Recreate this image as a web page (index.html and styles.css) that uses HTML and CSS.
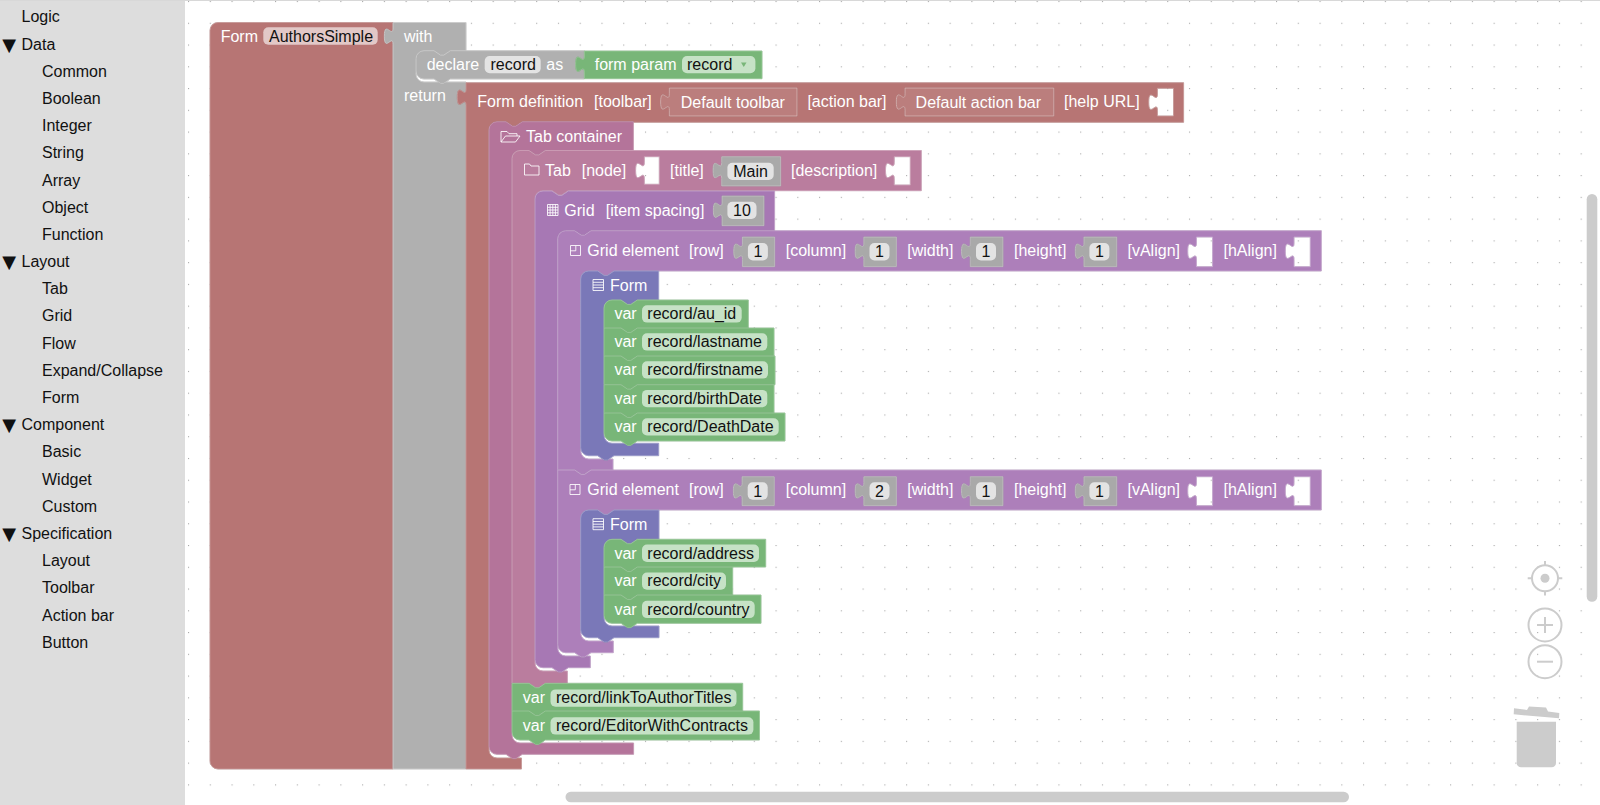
FILE: index.html
```html
<!DOCTYPE html>
<html lang="en">
  <head>
    <meta charset="UTF-8" />
    <meta name="viewport" content="width=device-width, initial-scale=1.0" />
    <title>Form editor</title>
    <link rel="stylesheet" href="styles.css">
  </head>
  <body>
    <aside class="toolbox">
      <div class="cat"><span class="caret"></span>Logic</div>
      <div class="cat"><span class="caret">▼</span>Data</div>
      <div class="sub">Common</div>
      <div class="sub">Boolean</div>
      <div class="sub">Integer</div>
      <div class="sub">String</div>
      <div class="sub">Array</div>
      <div class="sub">Object</div>
      <div class="sub">Function</div>
      <div class="cat"><span class="caret">▼</span>Layout</div>
      <div class="sub">Tab</div>
      <div class="sub">Grid</div>
      <div class="sub">Flow</div>
      <div class="sub">Expand/Collapse</div>
      <div class="sub">Form</div>
      <div class="cat"><span class="caret">▼</span>Component</div>
      <div class="sub">Basic</div>
      <div class="sub">Widget</div>
      <div class="sub">Custom</div>
      <div class="cat"><span class="caret">▼</span>Specification</div>
      <div class="sub">Layout</div>
      <div class="sub">Toolbar</div>
      <div class="sub">Action bar</div>
      <div class="sub">Button</div>
    </aside>

    <!-- workspace: viewBox uses page coordinates -->
    <svg class="workspace" viewBox="185 1 1415 804" xmlns="http://www.w3.org/2000/svg">
      <defs>
        <pattern id="dots" x="188" y="1" width="21.76" height="21.76" patternUnits="userSpaceOnUse">
          <rect width="1.1" height="1.1" class="dot" />
        </pattern>
      </defs>
      <rect x="185" y="1" width="1415" height="804" fill="url(#dots)" />

      <!-- Form AuthorsSimple -->
      <path class="b red" d="M210 30.5a8 8 0 0 1 8-8H393V769H218a8 8 0 0 1-8-8Z" />
      <text class="lbl" x="220.7" y="41">Form</text>
      <rect class="pill pill-red" x="263.3" y="27.3" width="114.4" height="17.4" rx="5" />
      <text class="txt" x="269" y="41">AuthorsSimple</text>

      <!-- with / return -->
      <path class="b gray" d="M393 22.5H466V50.7H450.3l-6.5 4.4h-3.3l-6.5-4.4H424a8 8 0 0 0-8 8V74a8 8 0 0 0 8 8H466V769H393V44.4c0-10.9-8.7 8.7-8.7-8.2s8.7 2.7 8.7-8.2Z" />
      <text class="lbl" x="404" y="41">with</text>
      <text class="lbl" x="404" y="100.7">return</text>

      <path class="b gray" d="M416 58.7a8 8 0 0 1 8-8H434l6.5 4.4h3.3l6.5-4.4H584.3V79H450.3l-6.5 4.4h-3.3l-6.5-4.4H424a8 8 0 0 1-8-8Z" />
      <text class="lbl" x="426.7" y="69">declare</text>
      <rect class="pill pill-gray" x="484.7" y="56" width="56" height="17.3" rx="5" />
      <text class="txt" x="490.5" y="69">record</text>
      <text class="lbl" x="546.3" y="69">as</text>

      <path class="b green" d="M584.3 51H762V78.7H584.3V72.4c0-10.9-8.7 8.7-8.7-8.2s8.7 2.7 8.7-8.2Z" />
      <text class="lbl" x="594.7" y="69">form param</text>
      <rect class="pill pill-green" x="682" y="56" width="73.4" height="17.3" rx="5" />
      <text class="txt" x="687" y="69">record</text>
      <path class="arrow" d="M741 62.5h5.5l-2.75 4.5Z" />

      <!-- Form definition -->
      <path class="b red" d="M466 82.7H1183.6V122.3H522.3l-6.5 4.4h-3.3l-6.5-4.4H497a8 8 0 0 0-8 8V750a8 8 0 0 0 8 8H521.5V769H466V105.4c0-10.9-8.7 8.7-8.7-8.2s8.7 2.7 8.7-8.2ZM1173.5 88.3V116H1157.4V110.4c0-10.9-8.7 8.7-8.7-8.2s8.7 2.7 8.7-8.2V88.3Z" />
      <text class="lbl" x="477.3" y="106.3">Form definition</text>
      <text class="lbl" x="594" y="106.3">[toolbar]</text>
      <path class="b shadow-red" d="M669.3 88H797V116H669.3V110.2c0-10.9-8.7 8.7-8.7-8.2s8.7 2.7 8.7-8.2Z" />
      <text class="lbl" x="680.8" y="107.7">Default toolbar</text>
      <text class="lbl" x="807.4" y="106.3">[action bar]</text>
      <path class="b shadow-red" d="M905 88H1053.8V116H905V110.2c0-10.9-8.7 8.7-8.7-8.2s8.7 2.7 8.7-8.2Z" />
      <text class="lbl" x="915.6" y="107.7">Default action bar</text>
      <text class="lbl" x="1064" y="106.3">[help URL]</text>

      <!-- Tab container -->
      <path class="b tabc" d="M489 129.7a8 8 0 0 1 8-8H506l6.5 4.4h3.3l6.5-4.4H633.4V150.5H545.3l-6.5 4.4h-3.3l-6.5-4.4H520a8 8 0 0 0-8 8V735a8 8 0 0 0 8 8H633.6V754.3H522.3l-6.5 4.4h-3.3l-6.5-4.4H497a8 8 0 0 1-8-8Z" />
      <path class="ico" d="M501 142V131.5h6l2 2.2h8v2.3M501 142h14.5l4.5-6H505.5Z" />
      <text class="lbl" x="526" y="141.3">Tab container</text>

      <!-- Tab -->
      <path class="b tab" d="M512 158.5a8 8 0 0 1 8-8H529l6.5 4.4h3.3l6.5-4.4H921.3V190.7H568.3l-6.5 4.4h-3.3l-6.5-4.4H543a8 8 0 0 0-8 8V663a8 8 0 0 0 8 8H567.4V683.3H545.3l-6.5 4.4h-3.3l-6.5-4.4H512ZM659.3 156.7V184.3H644.3V178.7c0-10.9-8.7 8.7-8.7-8.2s8.7 2.7 8.7-8.2V156.7ZM910.3 156.7V185H894.2V178.7c0-10.9-8.7 8.7-8.7-8.2s8.7 2.7 8.7-8.2V156.7Z" />
      <path class="ico" d="M524.5 175V164h5l1.5 2h8v9Z" />
      <text class="lbl" x="545" y="175">Tab</text>
      <text class="lbl" x="581.7" y="175">[node]</text>
      <text class="lbl" x="670" y="175">[title]</text>
      <path class="b num" d="M721.7 156.7H780.7V186H721.7V178.7c0-10.9-8.7 8.7-8.7-8.2s8.7 2.7 8.7-8.2Z" />
      <rect class="pill pill-gray" x="727.4" y="162.7" width="46.3" height="17.3" rx="5" />
      <text class="val" x="750.5" y="176">Main</text>
      <text class="lbl" x="791" y="175">[description]</text>

      <!-- Grid -->
      <path class="b grid" d="M535 199a8 8 0 0 1 8-8H552l6.5 4.4h3.3l6.5-4.4H774.6V231H591l-6.5 4.4h-3.3l-6.5-4.4H565.7a8 8 0 0 0-8 8V648a8 8 0 0 0 8 8H590.3V667.7H568.3l-6.5 4.4h-3.3l-6.5-4.4H543a8 8 0 0 1-8-8Z" />
      <path class="ico" d="M547.5 204.5h10.5v11h-10.5ZM547.5 207.3h10.5M547.5 210h10.5M547.5 212.8h10.5M550.1 204.5v11M552.8 204.5v11M555.4 204.5v11" />
      <text class="lbl" x="564.3" y="215">Grid</text>
      <text class="lbl" x="605.7" y="215">[item spacing]</text>
      <path class="b num" d="M722 196H764V225.7H722V218.4c0-10.9-8.7 8.7-8.7-8.2s8.7 2.7 8.7-8.2Z" />
      <rect class="pill pill-gray" x="727.4" y="201.7" width="29.1" height="17.3" rx="5" />
      <text class="val" x="742" y="215">10</text>

      <!-- Grid element 1 -->
      <path class="b cell" d="M557.7 238.7a8 8 0 0 1 8-8H574.7l6.5 4.4h3.3l6.5-4.4H1321.3V271H614l-6.5 4.4h-3.3l-6.5-4.4H588.7a8 8 0 0 0-8 8V451a8 8 0 0 0 8 8H613V470H591l-6.5 4.4h-3.3l-6.5-4.4H557.7ZM1212.6 237V266.7H1196.4V259.4c0-10.9-8.7 8.7-8.7-8.2s8.7 2.7 8.7-8.2V237ZM1310.3 237V266.7H1294V259.4c0-10.9-8.7 8.7-8.7-8.2s8.7 2.7 8.7-8.2V237Z" />
      <path class="ico" d="M570.5 245.5h10v10h-10ZM570.5 250.8h5.3v-5.3" />
      <text class="lbl" x="587.3" y="255">Grid element</text>
      <text class="lbl" x="689" y="255">[row]</text>
      <path class="b num" d="M742.4 237H774.7V266.7H742.4V259.4c0-10.9-8.7 8.7-8.7-8.2s8.7 2.7 8.7-8.2Z" />
      <rect class="pill pill-gray" x="747.9" y="243" width="20" height="17.5" rx="5" />
      <text class="val" x="757.9" y="256.5">1</text>
      <text class="lbl" x="785.7" y="255">[column]</text>
      <path class="b num" d="M863.8 237H896.4V266.7H863.8V259.4c0-10.9-8.7 8.7-8.7-8.2s8.7 2.7 8.7-8.2Z" />
      <rect class="pill pill-gray" x="869.5" y="243" width="20" height="17.5" rx="5" />
      <text class="val" x="879.5" y="256.5">1</text>
      <text class="lbl" x="907.2" y="255">[width]</text>
      <path class="b num" d="M970.2 237H1003V266.7H970.2V259.4c0-10.9-8.7 8.7-8.7-8.2s8.7 2.7 8.7-8.2Z" />
      <rect class="pill pill-gray" x="976" y="243" width="20" height="17.5" rx="5" />
      <text class="val" x="986" y="256.5">1</text>
      <text class="lbl" x="1014" y="255">[height]</text>
      <path class="b num" d="M1083.9 237H1116.8V266.7H1083.9V259.4c0-10.9-8.7 8.7-8.7-8.2s8.7 2.7 8.7-8.2Z" />
      <rect class="pill pill-gray" x="1089.4" y="243" width="20" height="17.5" rx="5" />
      <text class="val" x="1099.4" y="256.5">1</text>
      <text class="lbl" x="1127.5" y="255">[vAlign]</text>
      <text class="lbl" x="1223.5" y="255">[hAlign]</text>

      <!-- Form 1 -->
      <path class="b form" d="M580.7 279a8 8 0 0 1 8-8H597.7l6.5 4.4h3.3l6.5-4.4H658.7V300H637.3l-6.5 4.4h-3.3l-6.5-4.4H612a8 8 0 0 0-8 8V435.3a8 8 0 0 0 8 8H658.7V455.7H614l-6.5 4.4h-3.3l-6.5-4.4H588.7a8 8 0 0 1-8-8Z" />
      <path class="ico" d="M593 279.5h10.5v11H593ZM593 282.3h10.5M593 285h10.5M593 287.7h10.5" />
      <text class="lbl" x="610" y="290">Form</text>

      <path class="b green" d="M604 308a8 8 0 0 1 8-8H621l6.5 4.4h3.3l6.5-4.4H748.3V328H637.3l-6.5 4.4h-3.3l-6.5-4.4H604Z" />
      <text class="lbl" x="614.4" y="318.7">var</text>
      <rect class="pill pill-green" x="642" y="305.3" width="99.7" height="17.3" rx="5" />
      <text class="txt" x="647.3" y="318.7">record/au_id</text>

      <path class="b green" d="M604 328H621l6.5 4.4h3.3l6.5-4.4H774V356H637.3l-6.5 4.4h-3.3l-6.5-4.4H604Z" />
      <text class="lbl" x="614.4" y="346.7">var</text>
      <rect class="pill pill-green" x="642" y="333.3" width="125.3" height="17.3" rx="5" />
      <text class="txt" x="647.3" y="346.7">record/lastname</text>

      <path class="b green" d="M604 356H621l6.5 4.4h3.3l6.5-4.4H775V384.7H637.3l-6.5 4.4h-3.3l-6.5-4.4H604Z" />
      <text class="lbl" x="614.4" y="374.7">var</text>
      <rect class="pill pill-green" x="642" y="361.3" width="126" height="17.3" rx="5" />
      <text class="txt" x="647.3" y="374.7">record/firstname</text>

      <path class="b green" d="M604 384.7H621l6.5 4.4h3.3l6.5-4.4H774V413H637.3l-6.5 4.4h-3.3l-6.5-4.4H604Z" />
      <text class="lbl" x="614.4" y="403.2">var</text>
      <rect class="pill pill-green" x="642" y="389.9" width="125.3" height="17.3" rx="5" />
      <text class="txt" x="647.3" y="403.2">record/birthDate</text>

      <path class="b green" d="M604 413H621l6.5 4.4h3.3l6.5-4.4H785V441H637.3l-6.5 4.4h-3.3l-6.5-4.4H612a8 8 0 0 1-8-8Z" />
      <text class="lbl" x="614.4" y="431.5">var</text>
      <rect class="pill pill-green" x="642" y="418.2" width="136.7" height="17.3" rx="5" />
      <text class="txt" x="647.3" y="431.5">record/DeathDate</text>

      <!-- Grid element 2 -->
      <path class="b cell" d="M557.7 470H574.7l6.5 4.4h3.3l6.5-4.4H1321.3V510H614l-6.5 4.4h-3.3l-6.5-4.4H588.7a8 8 0 0 0-8 8V633a8 8 0 0 0 8 8H613.3V652.7H591l-6.5 4.4h-3.3l-6.5-4.4H565.7a8 8 0 0 1-8-8ZM1212.6 476.7V505.7H1196.4V499.1c0-10.9-8.7 8.7-8.7-8.2s8.7 2.7 8.7-8.2V476.7ZM1310.3 476.7V505.7H1294V499.1c0-10.9-8.7 8.7-8.7-8.2s8.7 2.7 8.7-8.2V476.7Z" />
      <path class="ico" d="M570 484.5h10v10h-10ZM570 489.8h5.3v-5.3" />
      <text class="lbl" x="587.3" y="494.7">Grid element</text>
      <text class="lbl" x="689" y="494.7">[row]</text>
      <path class="b num" d="M742 476.7H774.3V505.7H742V499.1c0-10.9-8.7 8.7-8.7-8.2s8.7 2.7 8.7-8.2Z" />
      <rect class="pill pill-gray" x="747.7" y="482.2" width="20" height="17.5" rx="5" />
      <text class="val" x="757.7" y="496">1</text>
      <text class="lbl" x="785.7" y="494.7">[column]</text>
      <path class="b num" d="M863.8 476.7H896.4V505.7H863.8V499.1c0-10.9-8.7 8.7-8.7-8.2s8.7 2.7 8.7-8.2Z" />
      <rect class="pill pill-gray" x="869.5" y="482.2" width="20" height="17.5" rx="5" />
      <text class="val" x="879.5" y="496">2</text>
      <text class="lbl" x="907.2" y="494.7">[width]</text>
      <path class="b num" d="M970.2 476.7H1003V505.7H970.2V499.1c0-10.9-8.7 8.7-8.7-8.2s8.7 2.7 8.7-8.2Z" />
      <rect class="pill pill-gray" x="976" y="482.2" width="20" height="17.5" rx="5" />
      <text class="val" x="986" y="496">1</text>
      <text class="lbl" x="1014" y="494.7">[height]</text>
      <path class="b num" d="M1083.9 476.7H1116.8V505.7H1083.9V499.1c0-10.9-8.7 8.7-8.7-8.2s8.7 2.7 8.7-8.2Z" />
      <rect class="pill pill-gray" x="1089.4" y="482.2" width="20" height="17.5" rx="5" />
      <text class="val" x="1099.4" y="496">1</text>
      <text class="lbl" x="1127.5" y="494.7">[vAlign]</text>
      <text class="lbl" x="1223.5" y="494.7">[hAlign]</text>

      <!-- Form 2 -->
      <path class="b form" d="M580.7 518a8 8 0 0 1 8-8H597.7l6.5 4.4h3.3l6.5-4.4H659V539.3H637.3l-6.5 4.4h-3.3l-6.5-4.4H612a8 8 0 0 0-8 8V618a8 8 0 0 0 8 8H659V637.7H614l-6.5 4.4h-3.3l-6.5-4.4H588.7a8 8 0 0 1-8-8Z" />
      <path class="ico" d="M593 518.7h10.5v11H593ZM593 521.5h10.5M593 524.2h10.5M593 526.9h10.5" />
      <text class="lbl" x="610" y="529.3">Form</text>

      <path class="b green" d="M604 547.3a8 8 0 0 1 8-8H621l6.5 4.4h3.3l6.5-4.4H765.7V567H637.3l-6.5 4.4h-3.3l-6.5-4.4H604Z" />
      <text class="lbl" x="614.4" y="558">var</text>
      <rect class="pill pill-green" x="642" y="544.6" width="117" height="17.3" rx="5" />
      <text class="txt" x="647.3" y="558">record/address</text>

      <path class="b green" d="M604 567H621l6.5 4.4h3.3l6.5-4.4H732.7V595H637.3l-6.5 4.4h-3.3l-6.5-4.4H604Z" />
      <text class="lbl" x="614.4" y="585.9">var</text>
      <rect class="pill pill-green" x="642" y="572.5" width="84" height="17.3" rx="5" />
      <text class="txt" x="647.3" y="585.9">record/city</text>

      <path class="b green" d="M604 595H621l6.5 4.4h3.3l6.5-4.4H761V623.3H637.3l-6.5 4.4h-3.3l-6.5-4.4H612a8 8 0 0 1-8-8Z" />
      <text class="lbl" x="614.4" y="614.2">var</text>
      <rect class="pill pill-green" x="642" y="600.8" width="112.7" height="17.3" rx="5" />
      <text class="txt" x="647.3" y="614.2">record/country</text>

      <!-- variables under the tab -->
      <path class="b green" d="M512 683.3H529l6.5 4.4h3.3l6.5-4.4H742.7V711H545.3l-6.5 4.4h-3.3l-6.5-4.4H512Z" />
      <text class="lbl" x="522.8" y="702.3">var</text>
      <rect class="pill pill-green" x="550.5" y="689.4" width="186" height="17.3" rx="5" />
      <text class="txt" x="556" y="702.3">record/linkToAuthorTitles</text>

      <path class="b green" d="M512 711H529l6.5 4.4h3.3l6.5-4.4H759.5V740H545.3l-6.5 4.4h-3.3l-6.5-4.4H520a8 8 0 0 1-8-8Z" />
      <text class="lbl" x="522.8" y="730.7">var</text>
      <rect class="pill pill-green" x="550.5" y="717.3" width="202.9" height="17.3" rx="5" />
      <text class="txt" x="556" y="730.7">record/EditorWithContracts</text>

      <!-- controls -->
      <circle class="ctl" cx="1545" cy="578.3" r="13" />
      <circle class="ctl-fill" cx="1545" cy="578.3" r="4.5" />
      <path class="ctl" d="M1545 561v4.5M1545 591v4.5M1527.7 578.3h4.5M1557.8 578.3h4.5" />
      <circle class="ctl" cx="1545" cy="625" r="16.5" />
      <path class="ctl" d="M1537 625h16M1545 617v16" />
      <circle class="ctl" cx="1545" cy="661.7" r="16.5" />
      <path class="ctl" d="M1537 661.7h16" />
      <path class="ctl-fill" d="M1514 708.3 1527 710 1529 706.5 1546 707.5 1548 711.5 1559.3 713 1559 718.3 1513.7 714.3Z" />
      <path class="ctl-fill" d="M1516.7 721.7H1556V763a4.3 4.3 0 0 1-4.3 4.3H1521a4.3 4.3 0 0 1-4.3-4.3Z" />

      <!-- scrollbars -->
      <rect class="scroll" x="1586.7" y="194" width="10.6" height="407.7" rx="5.3" />
      <rect class="scroll" x="565.5" y="791.7" width="783.5" height="10.6" rx="5.3" />
    </svg>
  </body>
</html>
```

FILE: styles.css
```css
html,
body {
  margin: 0;
  height: 100%;
}
body {
  display: flex;
  box-sizing: border-box;
  height: 805px;
  overflow: hidden;
  border-top: 1px solid #d8d8d8;
  font-family: "Liberation Sans", Arial, sans-serif;
  font-size: 16px;
  background-color: #fff;
}
.toolbox {
  flex: 0 0 185px;
  padding-top: 2.4px;
  background-color: #ddd;
  color: #111;
}
.cat,
.sub {
  display: flex;
  align-items: center;
  height: 27.2px;
  line-height: 27.2px;
}
.sub {
  padding-left: 42px;
}
.caret {
  flex: 0 0 18.5px;
  margin-right: 3px;
  font-family: "DejaVu Sans", sans-serif;
  font-size: 18px;
  text-align: center;
}
.workspace {
  flex: 0 0 1415px;
  width: 1415px;
  height: 804px;
}
.dot {
  fill: #a8a8a8;
}

/* blocks */
.b {
  fill-rule: evenodd;
  stroke-width: 0.8;
  filter: drop-shadow(0.7px 0.7px 0 rgba(0, 0, 0, 0.22));
}
.red {
  fill: #b77574;
  stroke: #c99a99;
}
.shadow-red {
  fill: #bb7e7d;
  stroke: #d8b6b5;
}
.gray {
  fill: #b0b0b0;
  stroke: #cfcfcf;
}
.num {
  fill: #a9a9a9;
  stroke: #c4c4c4;
}
.green {
  fill: #78b678;
  stroke: #9acb9a;
}
.tabc {
  fill: #b4749a;
  stroke: #ca9ab6;
}
.tab {
  fill: #ba7d9e;
  stroke: #d0a2ba;
}
.grid {
  fill: #a778b4;
  stroke: #c4a2cd;
}
.cell {
  fill: #ad7fba;
  stroke: #c8a8d2;
}
.form {
  fill: #7a78b8;
  stroke: #a2a1cf;
}

/* block text */
.lbl,
.txt,
.val {
  font-family: "Liberation Sans", Arial, sans-serif;
  font-size: 16px;
  transform: translateY(0.6px);
}
.lbl {
  fill: #fff;
}
.txt,
.val {
  fill: #111;
}
.val {
  text-anchor: middle;
}
.pill-red {
  fill: #e2c8c7;
}
.pill-gray {
  fill: #e3e3e3;
}
.pill-green {
  fill: #c6e2c6;
}
.arrow {
  fill: #78b678;
}
.ico {
  fill: none;
  stroke: #fff;
  stroke-width: 1;
  opacity: 0.85;
}

/* workspace controls */
.ctl {
  fill: none;
  stroke: #ccc;
  stroke-width: 2;
}
.ctl-fill {
  fill: #ccc;
}
.scroll {
  fill: #ccc;
}
```
